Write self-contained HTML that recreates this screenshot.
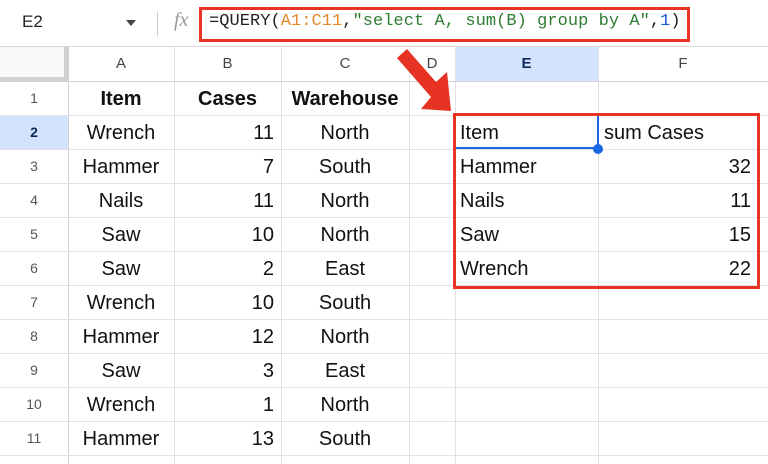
<!DOCTYPE html>
<html><head><style>
*{margin:0;padding:0;box-sizing:border-box}
body{width:768px;height:464px;overflow:hidden;background:#fff;font-family:"Liberation Sans",sans-serif;position:relative}
.a{position:absolute}
.vl{position:absolute;width:1px;background:#e1e1e1}
.hl{position:absolute;height:1px;background:#e1e1e1}
.c{position:absolute;height:34px;line-height:36px;font-size:20px;color:#111;white-space:nowrap}
.rh{position:absolute;left:0;width:68px;height:34px;line-height:34px;text-align:center;font-size:14px;color:#555}
.ch{position:absolute;top:47px;height:34px;line-height:34px;text-align:center;font-size:15px;color:#444}
</style></head><body>
<div class="a" style="left:22px;top:12px;font-size:17px;color:#222">E2</div>
<div class="a" style="left:126px;top:20px;width:0;height:0;border-left:5px solid transparent;border-right:5px solid transparent;border-top:6px solid #444"></div>
<div class="a" style="left:157px;top:12px;width:1px;height:24px;background:#ccc"></div>
<div class="a" style="left:174px;top:9px;font-family:'Liberation Serif',serif;font-style:italic;font-size:20px;color:#999">fx</div>
<div class="a" style="left:199px;top:7px;width:491px;height:35px;border:3px solid #e63323"></div>
<div class="a" style="left:209px;top:12px;font-family:'Liberation Mono',monospace;font-size:17px;color:#222;letter-spacing:0.05px">=QUERY(<span style="color:#e3892b">A1:C11</span>,<span style="color:#2e7d32">"select A, sum(B) group by A"</span>,<span style="color:#1a56d6">1</span>)</div>
<div class="hl" style="left:0;top:46px;width:768px;background:#d9d9d9"></div>
<div class="a" style="left:0;top:47px;width:68px;height:34px;background:#f8f9fa;border-right:4px solid #d0d0d0;border-bottom:4px solid #d0d0d0"></div>
<div class="a" style="left:455px;top:47px;width:143px;height:34px;background:#d3e3fd"></div>
<div class="a" style="left:0;top:115px;width:68px;height:34px;background:#d3e3fd"></div>
<div class="ch" style="left:68px;width:106px">A</div>
<div class="ch" style="left:174px;width:107px">B</div>
<div class="ch" style="left:281px;width:128px">C</div>
<div class="ch" style="left:409px;width:46px">D</div>
<div class="ch" style="left:455px;width:143px;font-weight:bold;color:#0b2a5a">E</div>
<div class="ch" style="left:598px;width:170px">F</div>
<div class="vl" style="left:68px;top:47px;height:417px;background:#d0d0d0"></div>
<div class="vl" style="left:174px;top:47px;height:417px"></div>
<div class="vl" style="left:281px;top:47px;height:417px"></div>
<div class="vl" style="left:409px;top:47px;height:417px"></div>
<div class="vl" style="left:455px;top:47px;height:417px"></div>
<div class="vl" style="left:598px;top:47px;height:417px"></div>
<div class="hl" style="left:0;top:81px;width:768px;background:#d0d0d0"></div>
<div class="hl" style="left:0;top:115px;width:768px"></div>
<div class="hl" style="left:0;top:149px;width:768px"></div>
<div class="hl" style="left:0;top:183px;width:768px"></div>
<div class="hl" style="left:0;top:217px;width:768px"></div>
<div class="hl" style="left:0;top:251px;width:768px"></div>
<div class="hl" style="left:0;top:285px;width:768px"></div>
<div class="hl" style="left:0;top:319px;width:768px"></div>
<div class="hl" style="left:0;top:353px;width:768px"></div>
<div class="hl" style="left:0;top:387px;width:768px"></div>
<div class="hl" style="left:0;top:421px;width:768px"></div>
<div class="hl" style="left:0;top:455px;width:768px"></div>
<div class="rh" style="top:81px">1</div>
<div class="rh" style="top:115px;font-weight:bold;color:#0b2a5a">2</div>
<div class="rh" style="top:149px">3</div>
<div class="rh" style="top:183px">4</div>
<div class="rh" style="top:217px">5</div>
<div class="rh" style="top:251px">6</div>
<div class="rh" style="top:285px">7</div>
<div class="rh" style="top:319px">8</div>
<div class="rh" style="top:353px">9</div>
<div class="rh" style="top:387px">10</div>
<div class="rh" style="top:421px">11</div>
<div class="c" style="left:68px;width:106px;top:81px;text-align:center;font-weight:bold">Item</div>
<div class="c" style="left:174px;width:107px;top:81px;text-align:center;font-weight:bold">Cases</div>
<div class="c" style="left:281px;width:128px;top:81px;text-align:center;font-weight:bold">Warehouse</div>

<div class="c" style="left:68px;width:106px;top:115px;text-align:center">Wrench</div><div class="c" style="left:174px;width:100px;top:115px;text-align:right">11</div><div class="c" style="left:281px;width:128px;top:115px;text-align:center">North</div>
<div class="c" style="left:68px;width:106px;top:149px;text-align:center">Hammer</div><div class="c" style="left:174px;width:100px;top:149px;text-align:right">7</div><div class="c" style="left:281px;width:128px;top:149px;text-align:center">South</div>
<div class="c" style="left:68px;width:106px;top:183px;text-align:center">Nails</div><div class="c" style="left:174px;width:100px;top:183px;text-align:right">11</div><div class="c" style="left:281px;width:128px;top:183px;text-align:center">North</div>
<div class="c" style="left:68px;width:106px;top:217px;text-align:center">Saw</div><div class="c" style="left:174px;width:100px;top:217px;text-align:right">10</div><div class="c" style="left:281px;width:128px;top:217px;text-align:center">North</div>
<div class="c" style="left:68px;width:106px;top:251px;text-align:center">Saw</div><div class="c" style="left:174px;width:100px;top:251px;text-align:right">2</div><div class="c" style="left:281px;width:128px;top:251px;text-align:center">East</div>
<div class="c" style="left:68px;width:106px;top:285px;text-align:center">Wrench</div><div class="c" style="left:174px;width:100px;top:285px;text-align:right">10</div><div class="c" style="left:281px;width:128px;top:285px;text-align:center">South</div>
<div class="c" style="left:68px;width:106px;top:319px;text-align:center">Hammer</div><div class="c" style="left:174px;width:100px;top:319px;text-align:right">12</div><div class="c" style="left:281px;width:128px;top:319px;text-align:center">North</div>
<div class="c" style="left:68px;width:106px;top:353px;text-align:center">Saw</div><div class="c" style="left:174px;width:100px;top:353px;text-align:right">3</div><div class="c" style="left:281px;width:128px;top:353px;text-align:center">East</div>
<div class="c" style="left:68px;width:106px;top:387px;text-align:center">Wrench</div><div class="c" style="left:174px;width:100px;top:387px;text-align:right">1</div><div class="c" style="left:281px;width:128px;top:387px;text-align:center">North</div>
<div class="c" style="left:68px;width:106px;top:421px;text-align:center">Hammer</div><div class="c" style="left:174px;width:100px;top:421px;text-align:right">13</div><div class="c" style="left:281px;width:128px;top:421px;text-align:center">South</div>
<div class="c" style="left:460px;top:115px">Item</div><div class="c" style="left:604px;top:115px">sum Cases</div>
<div class="c" style="left:460px;top:149px">Hammer</div><div class="c" style="left:598px;width:153px;top:149px;text-align:right">32</div>
<div class="c" style="left:460px;top:183px">Nails</div><div class="c" style="left:598px;width:153px;top:183px;text-align:right">11</div>
<div class="c" style="left:460px;top:217px">Saw</div><div class="c" style="left:598px;width:153px;top:217px;text-align:right">15</div>
<div class="c" style="left:460px;top:251px">Wrench</div><div class="c" style="left:598px;width:153px;top:251px;text-align:right">22</div>
<div class="a" style="left:456px;top:147px;width:143px;height:2px;background:#1a66e0"></div>
<div class="a" style="left:597px;top:116px;width:2px;height:33px;background:#1a66e0"></div>
<div class="a" style="left:593px;top:144px;width:10px;height:10px;border-radius:50%;background:#1a66e0"></div>
<div class="a" style="left:453px;top:113px;width:307px;height:176px;border:3px solid #e63323"></div>
<svg class="a" style="left:0;top:0" width="768" height="464"><polygon points="397,58 407,49 436,82 447,72 451,111 421,109 431,97" fill="#e63323"/></svg>
</body></html>
